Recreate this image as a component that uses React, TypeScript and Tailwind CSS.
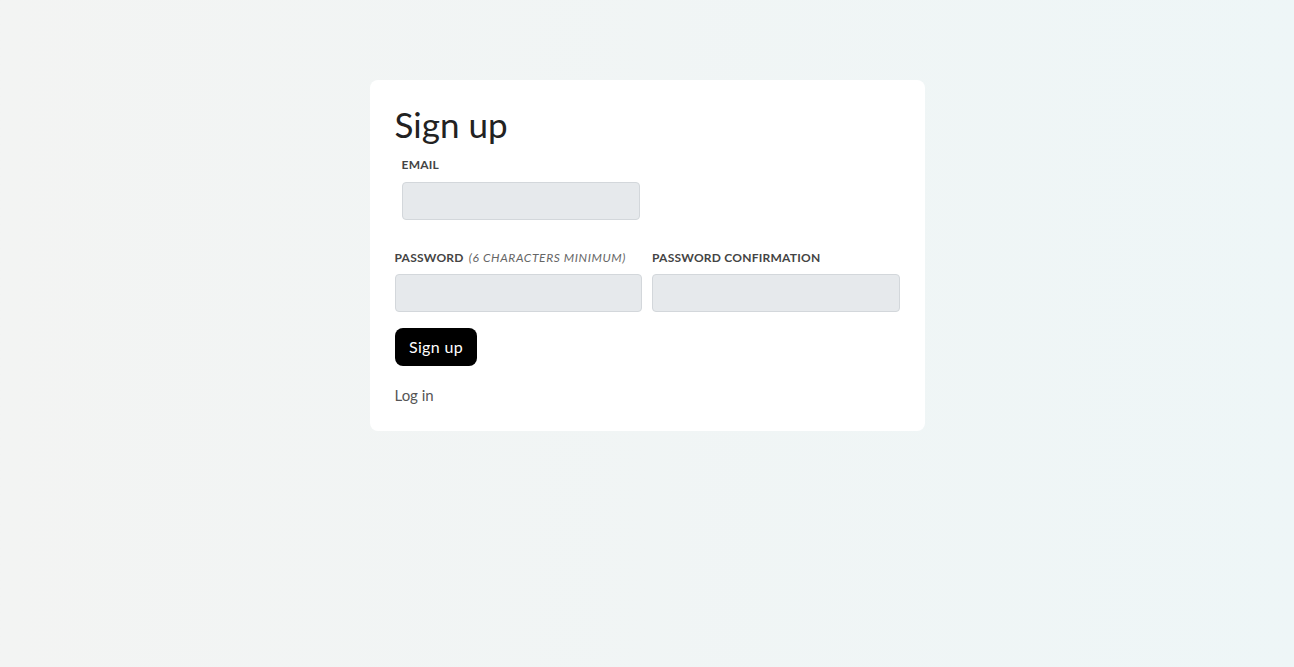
export default function App() {
  return (
    <div
      className="min-h-[667px] w-full bg-gradient-to-r from-[#f3f4f3] to-[#eef6f7] pt-20"
      style={{ fontFamily: 'Lato, "Noto Sans", sans-serif' }}
    >
      <div className="mx-auto w-[555px] rounded-lg bg-white px-[25px] pt-[22px] pb-[26px]">
        <h1 className="text-[35px] leading-[44px] font-normal text-[#222]">Sign up</h1>
        <form className="mt-[11px]" onSubmit={(e) => e.preventDefault()}>
          <div className="pl-[7px]">
            <label className="block text-[12px] leading-[16px] font-bold uppercase tracking-[0.02em] text-[#444]">
              Email
            </label>
            <input className="mt-[9px] block h-[38px] w-[238px] rounded border border-[#d3d7db] bg-[#e6e9ec]" />
          </div>
          <div className="mt-[30px] grid grid-cols-2 gap-[10px]">
            <div>
              <label className="block text-[12px] leading-[16px] font-bold uppercase tracking-[0.02em] text-[#444]">
                Password{' '}
                <em className="ml-[2px] text-[12px] font-normal tracking-[0.05em] text-[#666]">
                  (6 characters minimum)
                </em>
              </label>
              <input
                type="password"
                className="mt-[8px] block h-[38px] w-full rounded border border-[#d3d7db] bg-[#e6e9ec]"
              />
            </div>
            <div>
              <label className="block text-[12px] leading-[16px] font-bold uppercase tracking-[0.02em] text-[#444]">
                Password confirmation
              </label>
              <input
                type="password"
                className="mt-[8px] block h-[38px] w-full rounded border border-[#d3d7db] bg-[#e6e9ec]"
              />
            </div>
          </div>
          <button className="mt-4 h-[38px] rounded-lg bg-black px-[14.5px] text-[16px] tracking-[0.02em] text-white">
            Sign up
          </button>
        </form>
        <a className="mt-[19px] block text-[15px] leading-[20px] text-[#555]" href="#">
          Log in
        </a>
      </div>
    </div>
  );
}
